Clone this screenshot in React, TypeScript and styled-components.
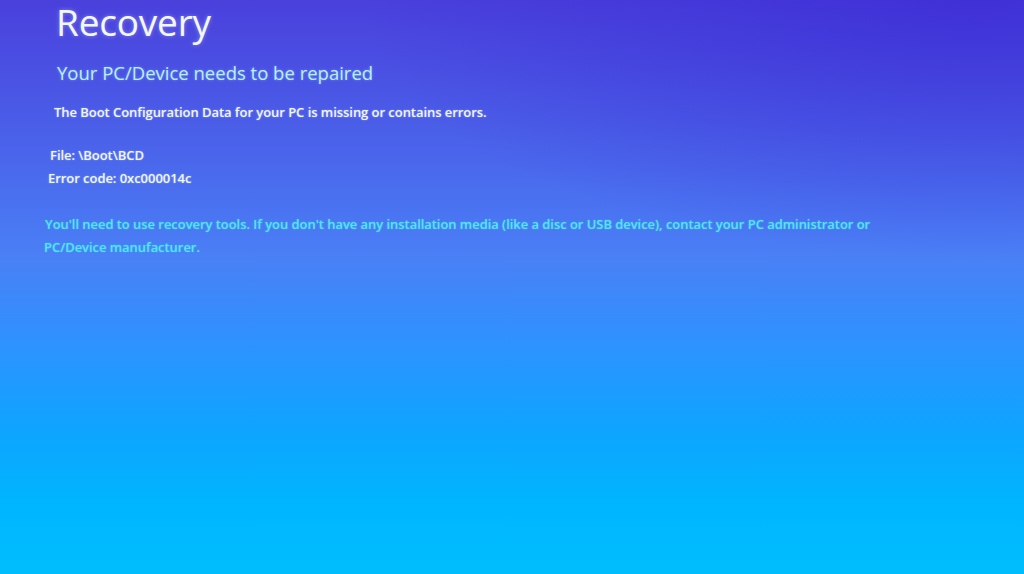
import React from "react";
import styled, { createGlobalStyle } from "styled-components";

const GlobalStyle = createGlobalStyle`
  html, body {
    margin: 0;
    padding: 0;
    width: 100%;
    height: 100%;
    overflow: hidden;
  }
  #root {
    height: 100%;
  }
`;

const Screen = styled.div`
  width: 1024px;
  height: 574px;
  box-sizing: border-box;
  padding-top: 3px;
  font-family: "Open Sans", "Noto Sans", sans-serif;
  background:
    radial-gradient(ellipse 60% 45% at 95% 0%, rgba(55, 35, 210, 0.55), rgba(55, 35, 210, 0) 100%),
    linear-gradient(
      180deg,
      #4a40dc 0%,
      #4a5ee8 22%,
      #4a80f6 45%,
      #2e92ff 60%,
      #0ea4ff 75%,
      #00b6ff 88%,
      #00befe 100%
    );
  display: flex;
  flex-direction: column;
`;

const Line = styled.div<{ $indent: number; $top: number }>`
  margin-left: ${(p) => p.$indent}px;
  margin-top: ${(p) => p.$top}px;
  white-space: nowrap;
`;

const Title = styled(Line)`
  font-size: 37px;
  line-height: 38px;
  color: #f2f8ff;
  letter-spacing: -0.2px;
  text-shadow: 0 0 4px rgba(255, 255, 255, 0.35);
`;

const Subtitle = styled(Line)`
  font-size: 18.5px;
  line-height: 22px;
  color: #b4f2ff;
  text-shadow: 0 0 3px rgba(180, 240, 255, 0.4);
`;

const Body = styled(Line)<{ $cyan?: boolean }>`
  font-size: 13px;
  font-weight: 600;
  line-height: 23px;
  letter-spacing: -0.05px;
  color: ${(p) => (p.$cyan ? "#4ee6f4" : "#eef6ff")};
  text-shadow: 0 0 2px
    ${(p) => (p.$cyan ? "rgba(80, 230, 240, 0.5)" : "rgba(255, 255, 255, 0.4)")};
`;

export default function App() {
  return (
    <>
      <GlobalStyle />
      <Screen>
        <Title $indent={56} $top={0}>Recovery</Title>
        <Subtitle $indent={57} $top={21}>
          Your PC/Device needs to be repaired
        </Subtitle>
        <Body $indent={54} $top={17}>
          The Boot Configuration Data for your PC is missing or contains errors.
        </Body>
        <Body $indent={50} $top={20}>File: \Boot\BCD</Body>
        <Body $indent={48} $top={0}>Error code: 0xc000014c</Body>
        <Body $indent={45} $top={23} $cyan>
          You'll need to use recovery tools. If you don't have any installation media
          (like a disc or USB device), contact your PC administrator or
        </Body>
        <Body $indent={44} $top={0} $cyan>
          PC/Device manufacturer.
        </Body>
      </Screen>
    </>
  );
}
